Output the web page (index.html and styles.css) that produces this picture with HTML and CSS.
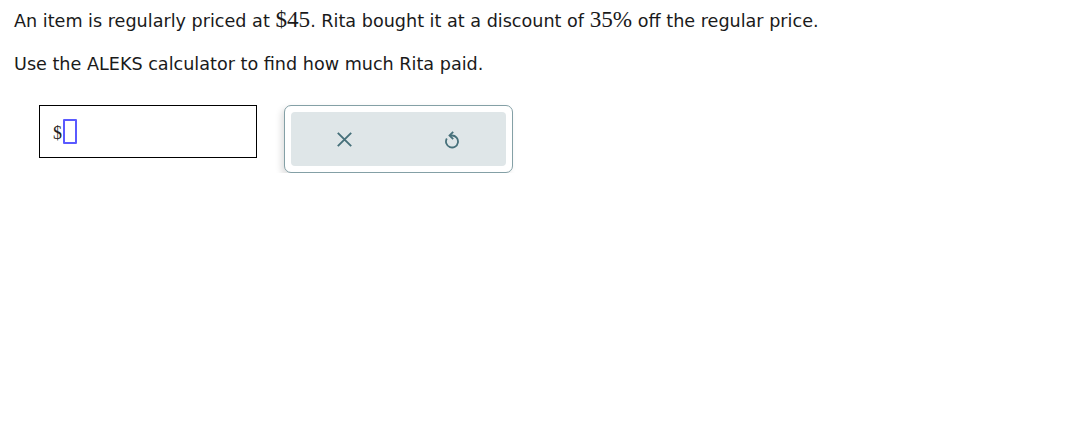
FILE: index.html
```html
<!DOCTYPE html>
<html>
<head>
<meta charset="utf-8">
<link rel="stylesheet" href="styles.css">
</head>
<body>
<div class="page">
  <p class="line line1">An item is regularly priced at <span class="num">$45</span>. Rita bought it at a discount of <span class="num">35%</span> off the regular price.</p>
  <p class="line line2">Use the ALEKS calculator to find how much Rita paid.</p>
  <div class="work">
    <div class="answer">
      <span class="dollar">$</span><span class="input"></span>
    </div>
    <div class="calc">
      <div class="calc-inner">
        <button class="btn" aria-label="clear">
          <svg width="17" height="17" viewBox="0 0 17 17"><path d="M1.8 1.8 L15.2 15.2 M15.2 1.8 L1.8 15.2" stroke="#46707a" stroke-width="1.9" fill="none"/></svg>
        </button>
        <button class="btn" aria-label="undo">
          <svg width="16" height="20" viewBox="0 0 16 20"><path d="M2.8 9.5 A6 6 0 1 0 8 6.5 L6 6.5" stroke="#46707a" stroke-width="1.8" fill="none"/><path d="M9.2 2.8 L5.5 6.5 L9.2 10.2" stroke="#46707a" stroke-width="1.8" fill="none"/></svg>
        </button>
      </div>
    </div>
  </div>
</div>
</body>
</html>
```
FILE: styles.css
```css
body {
  margin: 0;
  background: #ffffff;
  font-family: "DejaVu Sans", Verdana, sans-serif;
  color: #1a1a1a;
}
.page {
  padding: 0 14px;
}
.line {
  margin: 0;
  font-size: 17.6px;
  line-height: 22px;
}
.line1 {
  padding-top: 9px;
}
.line2 {
  padding-top: 21px;
}
.num {
  font-family: "Liberation Serif", "Times New Roman", serif;
  font-size: 23.2px;
  line-height: 20px;
}
.work {
  display: flex;
  align-items: flex-start;
  gap: 27px;
  margin-top: 30px;
  padding-left: 25px;
}
.answer {
  width: 218px;
  height: 53px;
  border: 1px solid #000;
  display: flex;
  align-items: center;
  padding-left: 13px;
  box-sizing: border-box;
}
.dollar {
  font-family: "Liberation Serif", "Times New Roman", serif;
  font-size: 18px;
  color: #222;
  margin-top: 3px;
}
.input {
  display: inline-block;
  width: 14px;
  height: 25px;
  box-sizing: border-box;
  border: 2px solid #5a5aff;
  border-radius: 1px;
  margin-left: 1px;
}
.calc {
  width: 229px;
  height: 68px;
  box-sizing: border-box;
  border: 1px solid #84a0a6;
  border-radius: 7px;
  padding: 6px;
  background: #fff;
  box-shadow: -3px 3px 6px rgba(0, 0, 0, 0.12);
}
.calc-inner {
  height: 100%;
  background: #dfe6e8;
  border-radius: 4px;
  display: flex;
  align-items: center;
  justify-content: space-around;
}
.btn {
  border: 0;
  background: transparent;
  padding: 0;
  width: 30px;
  height: 30px;
  display: flex;
  align-items: center;
  justify-content: center;
}
```
